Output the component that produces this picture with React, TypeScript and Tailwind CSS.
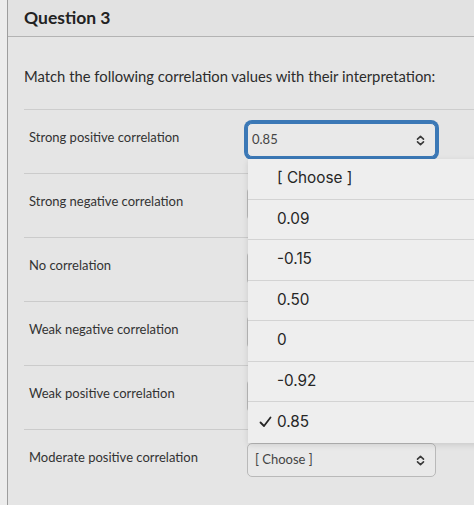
import React from 'react'

const rows = [
  'Strong positive correlation',
  'Strong negative correlation',
  'No correlation',
  'Weak negative correlation',
  'Weak positive correlation',
  'Moderate positive correlation',
]

const options = ['[ Choose ]', '0.09', '-0.15', '0.50', '0', '-0.92', '0.85']

function Chevrons() {
  return (
    <svg width="9" height="11" viewBox="0 0 9 11" fill="none" stroke="#3a3a3a" strokeWidth="1.6" strokeLinecap="round" strokeLinejoin="round">
      <path d="M1.5 4.2 L4.5 1.3 L7.5 4.2" />
      <path d="M1.5 6.8 L4.5 9.7 L7.5 6.8" />
    </svg>
  )
}

// value is left out for the selects that sit under the open menu
function Select({ value, focused }: { value?: string; focused?: boolean }) {
  return (
    <div
      className={
        'flex h-[34px] w-[189px] items-center justify-between rounded-[5px] border bg-[#e9e9e9] pr-[10px] text-[13px] text-[#444] ' +
        (focused
          ? 'border-[#3b78b6] pl-[4px] shadow-[0_0_0_3px_#3b78b6]'
          : 'border-[#b9b9b9] pl-[7px]')
      }
    >
      <span>{value}</span>
      {value && <Chevrons />}
    </div>
  )
}

export default function App() {
  return (
    <div
      className="relative h-[505px] w-[474px] overflow-hidden bg-[#ececec]"
      style={{ fontFamily: 'Lato, "Noto Sans", sans-serif' }}
    >
      <div className="ml-[7px] h-full border-l border-[#9d9d9d] bg-[#e5e5e5]">
        <div className="flex h-[37px] items-center border-b border-[#b3b3b3] bg-[#e2e2e2] pl-[16px]">
          <h2 className="text-[17.5px] font-bold text-[#222]">Question 3</h2>
        </div>

        <div className="pl-[16px]">
          <div className="flex h-[73px] items-center border-b border-[#cdcdcd] pt-[6px]">
            <p className="text-[14.8px] text-[#2c2c2c]">
              Match the following correlation values with their interpretation:
            </p>
          </div>

          <div className="relative">
            {rows.map((label, i) => (
              <div
                key={label}
                className={
                  'flex h-[64px] items-start ' +
                  (i < rows.length - 1 ? 'border-b border-[#cbcbcb]' : '')
                }
              >
                <div className="w-[223px] pl-[5px] pt-[18px] text-[13px] leading-[18px] text-[#333]">
                  {label}
                </div>
                <div className="mt-[13px]">
                  {i === 0 && <Select value="0.85" focused />}
                  {i > 0 && i < rows.length - 1 && <Select />}
                  {i === rows.length - 1 && <Select value="[ Choose ]" />}
                </div>
              </div>
            ))}

            <div
              className="absolute left-[224px] top-[49px] w-[240px] bg-[#eeeeee] shadow-[0_2px_6px_rgba(0,0,0,0.12)]"
              style={{ fontFamily: 'Inter, Roboto, sans-serif' }}
            >
              {options.map((opt, i) => (
                <div
                  key={opt}
                  className={
                    'relative flex h-[40.5px] items-center pl-[29px] text-[15.3px] text-[#262626] ' +
                    (i < options.length - 1 ? 'border-b border-[#d3d3d3]' : '')
                  }
                >
                  {i === options.length - 1 && (
                    <svg
                      className="absolute left-[11px] top-[14px]"
                      width="13"
                      height="12"
                      viewBox="0 0 13 12"
                      fill="none"
                      stroke="#262626"
                      strokeWidth="1.8"
                      strokeLinecap="round"
                      strokeLinejoin="round"
                    >
                      <path d="M1.5 6.5 L5 10 L11.5 1.5" />
                    </svg>
                  )}
                  {opt}
                </div>
              ))}
            </div>
          </div>
        </div>
      </div>
    </div>
  )
}
